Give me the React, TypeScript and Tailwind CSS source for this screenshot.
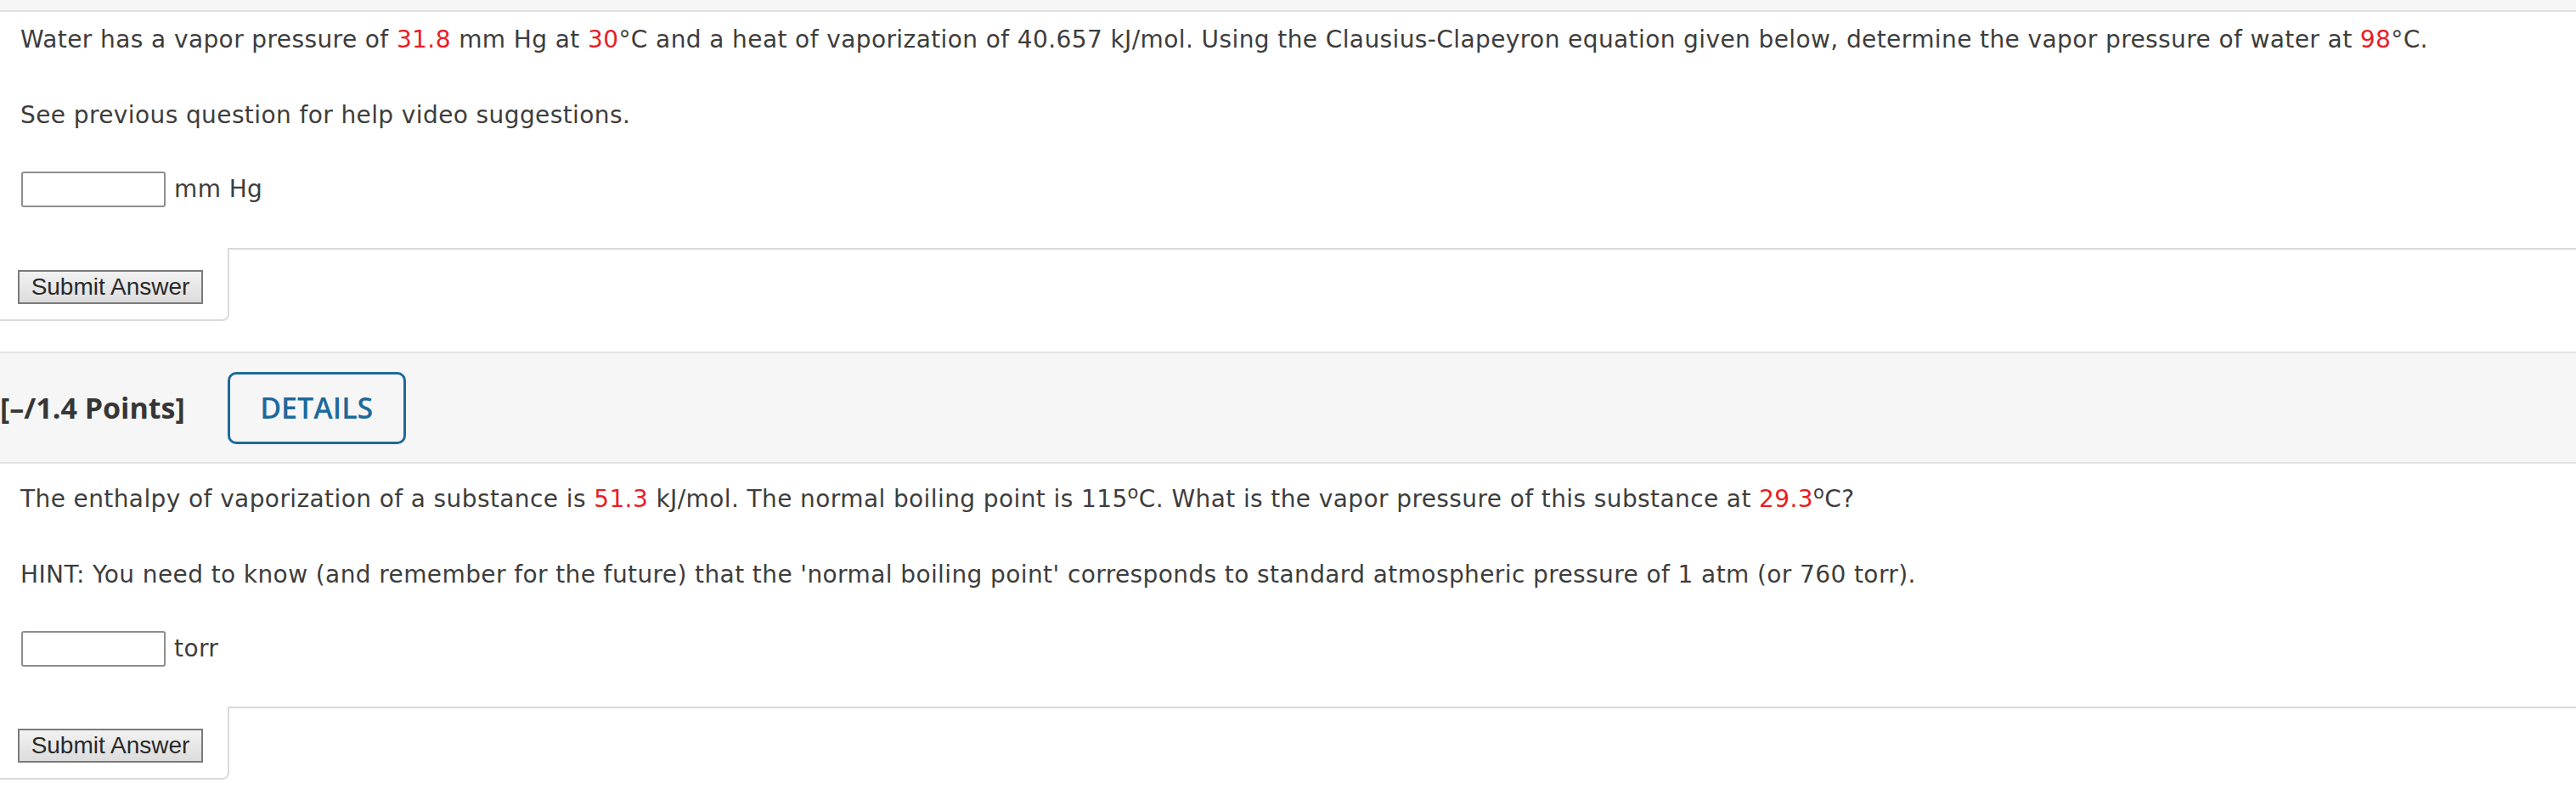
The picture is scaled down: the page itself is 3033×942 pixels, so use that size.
import React from 'react';

const Red = ({ children }: { children: React.ReactNode }) => (
  <span className="text-[#ea1c24]">{children}</span>
);

function AnswerRow({ unit }: { unit: string }) {
  return (
    <div className="flex items-center gap-[10px] pl-[25px]">
      <input
        type="text"
        className="w-[170px] h-[42px] border-2 border-[#8f8f8f] rounded-[3px] bg-white outline-none"
      />
      <span className="leading-[40px]">{unit}</span>
    </div>
  );
}

function SubmitPanel() {
  return (
    <div className="flex">
      <div className="w-[270px] h-[86px] shrink-0 pl-[21px] pt-[25px] border-r-2 border-b-2 border-[#dadada] rounded-br-[8px]">
        <button className="w-[218px] h-[40px] border-2 border-[#7b7b7b] bg-gradient-to-b from-[#f2f2f2] to-[#dcdcdc] text-[28px] leading-none tracking-normal text-[#2a2a2a] font-['Liberation_Sans',Arial,sans-serif]">
          Submit Answer
        </button>
      </div>
      <div className="flex-1 border-t-2 border-[#dadada]" />
    </div>
  );
}

export default function App() {
  return (
    <div className="w-[3033px] h-[942px] overflow-hidden bg-white text-[#3d3d3d] text-[28px] tracking-[0.4px] font-['DejaVu_Sans',Verdana,sans-serif]">
      {/* tail of the previous question header */}
      <div className="h-[14px] bg-[#f6f6f6] border-b-2 border-[#e2e2e2]" />

      {/* question 1 */}
      <div className="pt-[13px]">
        <p className="pl-[24px] leading-[40px] whitespace-nowrap">
          Water has a vapor pressure of <Red>31.8</Red> mm Hg at <Red>30</Red>°C and a heat of vaporization of 40.657 kJ/mol. Using the Clausius-Clapeyron equation given below, determine the vapor pressure of water at <Red>98</Red>°C.
        </p>
        <p className="pl-[24px] mt-[49px] leading-[40px]">See previous question for help video suggestions.</p>
        <div className="mt-[46px]">
          <AnswerRow unit="mm Hg" />
        </div>
        <div className="mt-[48px]">
          <SubmitPanel />
        </div>
      </div>

      {/* question 2 header */}
      <div className="mt-[36px] h-[132px] flex items-center bg-[#f6f6f6] border-y-2 border-[#e2e2e2]">
        <span className="text-[34px] font-bold tracking-normal text-[#363636] font-['Open_Sans',sans-serif] whitespace-nowrap">
          [–/1.4 Points]
        </span>
        <button className="ml-[50px] w-[210px] h-[85px] border-[3px] border-[#1d6a9c] rounded-[10px] text-[34px] font-semibold tracking-normal text-[#1d6a9c] font-['Open_Sans',sans-serif]">
          DETAILS
        </button>
      </div>

      {/* question 2 */}
      <div className="pt-[22px]">
        <p className="pl-[24px] leading-[40px] whitespace-nowrap">
          The enthalpy of vaporization of a substance is <Red>51.3</Red> kJ/mol. The normal boiling point is 115<sup>o</sup>C. What is the vapor pressure of this substance at <Red>29.3</Red><sup>o</sup>C?
        </p>
        <p className="pl-[24px] mt-[49px] leading-[40px] whitespace-nowrap">
          HINT: You need to know (and remember for the future) that the 'normal boiling point' corresponds to standard atmospheric pressure of 1 atm (or 760 torr).
        </p>
        <div className="mt-[46px]">
          <AnswerRow unit="torr" />
        </div>
        <div className="mt-[47px]">
          <SubmitPanel />
        </div>
      </div>
    </div>
  );
}
